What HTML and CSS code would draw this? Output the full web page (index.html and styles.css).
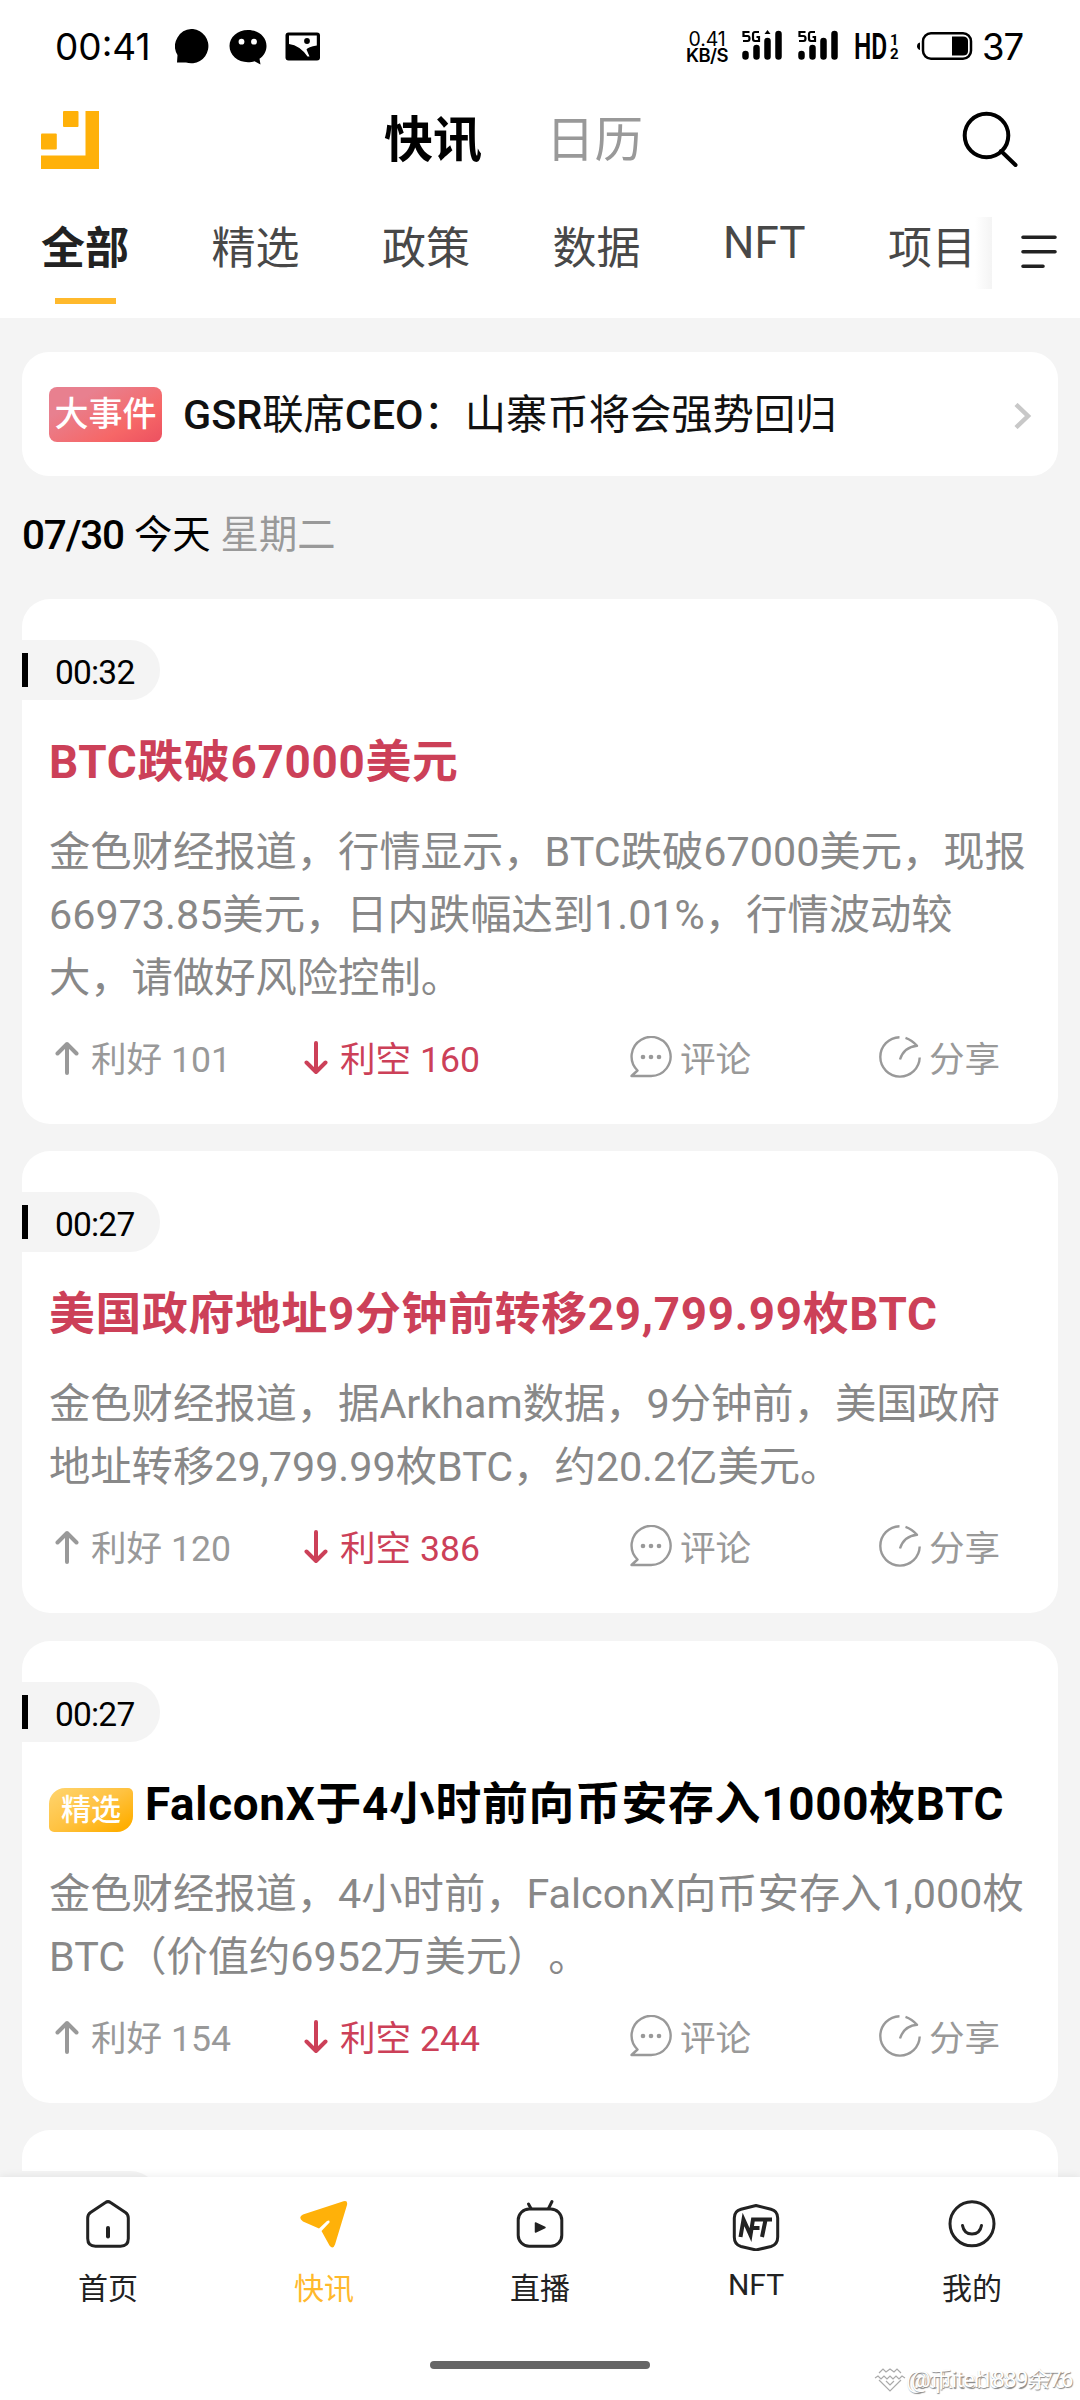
FILE: index.html
```html
<!DOCTYPE html>
<html lang="zh-CN">
<head>
<meta charset="utf-8">
<title>快讯</title>
<link rel="stylesheet" href="styles.css">
</head>
<body>
<svg class="defs" aria-hidden="true">
  <symbol id="up" viewBox="0 0 24 34"><path d="M12 32V3M2.500 12.500L12 3L21.500 12.500"/></symbol>
  <symbol id="down" viewBox="0 0 24 34"><path d="M12 2V31M2.500 21.500L12 31L21.500 21.500"/></symbol>
  <symbol id="comment" viewBox="0 0 42 42"><path d="M21 40H1.500L7.500 34.500A19.500 19.500 0 1 1 21 40Z"/><g class="dots"><circle cx="13" cy="21" r="2.300"/><circle cx="21" cy="21" r="2.300"/><circle cx="29" cy="21" r="2.300"/></g></symbol>
  <symbol id="share" viewBox="0 0 42 42"><path d="M20.500 1.200A19.700 19.700 0 1 0 40.700 21.500M26.500 1.800Q33 4 38 9.800Q25 11 21 23.500"/></symbol>
</svg>
<div class="screen">
  <header class="header">
    <div class="status">
      <div class="status-left">
        <span class="clock">00:41</span>
        <svg width="36" height="36" viewBox="0 0 36 36"><path d="M18 0A17.200 17.200 0 1 1 11 33.500L2 33.500L2.500 26A17.200 17.200 0 0 1 18 0Z"/></svg>
        <svg class="wechat" width="38" height="36" viewBox="0 0 38 36"><path d="M19 1C29.500 1 37.500 8 37.500 17C37.500 22.500 34.500 27 30.500 29.800L31.500 35.500L25.500 32.200C23.500 32.900 21.500 33.200 19 33.200C8.500 33.200.5 26 .5 17S8.500 1 19 1Z"/><circle cx="12.500" cy="12.700" r="2.900" fill="#fff"/><circle cx="25" cy="12.700" r="2.900" fill="#fff"/></svg>
        <svg class="photo" width="36" height="36" viewBox="0 0 36 36"><rect x=".5" y="3.500" width="34.500" height="28" rx="3"/><path d="M4 6.500H31.800V16.500Q23 18 21.500 20.500L24.500 27.500H22.500Q15 16.500 4 15Z" fill="#fff"/><circle cx="22" cy="12" r="2.900"/></svg>
      </div>
      <div class="status-right">
        <div class="speed"><span>0.41</span><b>KB/S</b></div>
        <svg width="41" height="32" viewBox="0 0 41 32"><g class="fiveg"><path d="M7.500 2H1.500V6H5.500Q7.500 6 7.500 8.500T5.500 11H1M17 2H13Q11 2 11 4.500V8.500Q11 11 13 11H17V7H14.500"/></g><path d="M25.500 0L28.500 4H22.500Z"/><path class="bars" d="M3.500 24V26.500M14.500 18V26.500M25.500 11V26.500M36.500 4V26.500"/></svg>
        <svg class="signal2" width="41" height="32" viewBox="0 0 41 32"><g class="fiveg"><path d="M7.500 2H1.500V6H5.500Q7.500 6 7.500 8.500T5.500 11H1M17 2H13Q11 2 11 4.500V8.500Q11 11 13 11H17V7H14.500"/></g><path class="bars" d="M3.500 24V26.500M14.500 18V26.500M25.500 11V26.500M36.500 4V26.500"/></svg>
        <span class="hd">HD</span>
        <span class="sims"><i>1</i><i>2</i></span>
        <svg class="battery" width="56" height="30" viewBox="0 0 56 30"><rect x="6" y="2.300" width="48" height="25.400" rx="8" fill="none" stroke="#000" stroke-width="2.500"/><path d="M35 5.500H46Q51 5.500 51 10V20Q51 24.500 46 24.500H35Z"/><path d="M3 11.500V19Q0 18 0 15.200T3 11.500Z"/></svg>
        <span class="level">37</span>
      </div>
    </div>
    <div class="topbar">
      <svg class="logo" width="58" height="58" viewBox="0 0 58 58"><path d="M44.500 0H58V58H0V44.500H44.500Z"/><rect x="22" width="15.500" height="16" rx="1"/><rect y="22.500" width="15.800" height="16" rx="1"/></svg>
      <div class="switcher"><b>快讯</b><span>日历</span></div>
      <svg class="search" width="58" height="58" viewBox="0 0 58 58"><circle cx="25.500" cy="24.500" r="21.800"/><path d="M40 40L54.500 54"/></svg>
    </div>
    <div class="tabs">
      <nav class="tablist">
        <span class="tab active">全部</span><span class="tab">精选</span><span class="tab">政策</span><span class="tab">数据</span><span class="tab latin">NFT</span><span class="tab">项目</span>
      </nav>
      <span class="fade"></span>
      <svg class="menu" width="36" height="34" viewBox="0 0 36 34"><path d="M2 2.200H34M2 16.700H34M2 31.200H22"/></svg>
    </div>
  </header>

  <main class="feed">
    <section class="banner">
      <span class="event">大事件</span>
      <span class="headline"><b>GSR</b>联席<b>CEO</b>：山寨币将会强势回归</span>
      <svg width="18" height="26" viewBox="0 0 18 26"><path d="M2 1.500L14 13L2 24.500"/></svg>
    </section>
    <div class="date"><b>07/30</b><span>今天</span><span class="weekday">星期二</span></div>

    <article class="card">
      <time class="time">00:32</time>
      <h2 class="title hot">BTC跌破67000美元</h2>
      <p class="body">金色财经报道，行情显示，BTC跌破67000美元，现报66973.85美元，日内跌幅达到1.01%，行情波动较大，请做好风险控制。</p>
      <div class="actions">
        <span class="act"><svg class="arrow"><use href="#up"/></svg>利好 101</span>
        <span class="act bear"><svg class="arrow"><use href="#down"/></svg>利空 160</span>
        <span class="act"><svg class="round"><use href="#comment"/></svg>评论</span>
        <span class="act"><svg class="round"><use href="#share"/></svg>分享</span>
      </div>
    </article>

    <article class="card">
      <time class="time">00:27</time>
      <h2 class="title hot">美国政府地址9分钟前转移29,799.99枚BTC</h2>
      <p class="body">金色财经报道，据Arkham数据，9分钟前，美国政府地址转移29,799.99枚BTC，约20.2亿美元。</p>
      <div class="actions">
        <span class="act"><svg class="arrow"><use href="#up"/></svg>利好 120</span>
        <span class="act bear"><svg class="arrow"><use href="#down"/></svg>利空 386</span>
        <span class="act"><svg class="round"><use href="#comment"/></svg>评论</span>
        <span class="act"><svg class="round"><use href="#share"/></svg>分享</span>
      </div>
    </article>

    <article class="card featured">
      <time class="time">00:27</time>
      <h2 class="title"><span class="pick">精选</span>FalconX于4小时前向币安存入1000枚BTC</h2>
      <p class="body">金色财经报道，4小时前，FalconX向币安存入1,000枚BTC（价值约6952万美元）。</p>
      <div class="actions">
        <span class="act"><svg class="arrow"><use href="#up"/></svg>利好 154</span>
        <span class="act bear"><svg class="arrow"><use href="#down"/></svg>利空 244</span>
        <span class="act"><svg class="round"><use href="#comment"/></svg>评论</span>
        <span class="act"><svg class="round"><use href="#share"/></svg>分享</span>
      </div>
    </article>

    <article class="card next"><span class="time"></span></article>
  </main>

  <footer class="footer">
    <nav class="nav">
      <a class="item"><svg viewBox="0 0 52 52"><path d="M23.500 3.500Q26 1.700 28.500 3.500L43.500 13.500Q46.300 15.500 46.300 19V39.500Q46.300 47.200 38.500 47.200H13.500Q5.700 47.200 5.700 39.500V19Q5.700 15.500 8.500 13.500Z"/><path class="door" d="M26 29V37.500"/></svg>首页</a>
      <a class="item on"><svg viewBox="0 0 52 52"><path d="M45.500 2.200Q50 1 49 6L37 45.500Q35 51 31.500 46.500L23.500 32L31.500 23.500Q32 20.500 29 22L21 29.500L5 22.500Q-.5 18.500 5 15.500Z"/></svg>快讯</a>
      <a class="item"><svg viewBox="0 0 52 52"><rect x="4.200" y="10" width="43.600" height="37.200" rx="11"/><path d="M14.500 5L17 9.500M38 2.500L34.500 9.500"/><path class="play" d="M21.500 24L31 28.500L21.500 33Z"/></svg>直播</a>
      <a class="item latin"><svg viewBox="0 0 52 52"><path d="M26 6.500L41 10.200Q47.700 12 47.700 19V38Q47.700 45.500 41 47.500L26 51L11 47.500Q4.300 45.500 4.300 38V19Q4.300 12 11 10.200Z"/><path class="mark" d="M10.500 38L13.500 20.500L20.500 36L23 20.500H42M22.500 29H29.500M35.500 21L32 38"/></svg>NFT</a>
      <a class="item"><svg viewBox="0 0 52 52"><circle cx="26" cy="24.800" r="22"/><path d="M16.500 26.500Q18 35 26 35T35.500 26.500"/></svg>我的</a>
    </nav>
    <span class="home-bar"></span>
    <div class="watermark">
      <svg width="32" height="24" viewBox="0 0 32 24"><path d="M5 5L9 1L12 4L16 1L20 4L23 1L27 5M1 10L4 8L7 11L10 8L13 11L16 8L19 11L22 8L25 11L28 8L31 10M5 12L16 23L27 12M12 13L16 17L20 13"/></svg>
      <span class="wm"><span>@qkiteb889476</span><span class="ghost">@币iter1889余76</span></span>
    </div>
  </footer>
</div>
</body>
</html>
```

FILE: styles.css
```css
* { box-sizing: border-box; }
body {
  margin: 0;
  font-family: Roboto, "Noto Sans CJK SC", sans-serif;
  background: #f4f4f4;
  color: #000;
  text-spacing-trim: space-all;
}
.defs { display: none; }
svg { display: block; flex: none; }
.screen {
  width: 1080px;
  height: 2400px;
  display: flex;
  flex-direction: column;
  overflow: hidden;
}

/* Header */
.header { height: 318px; flex: none; background: #fff; }
.status {
  height: 90px;
  padding: 0 57px 0 55px;
  display: flex;
  justify-content: space-between;
  align-items: center;
  font-family: Inter, sans-serif;
}
.status-left, .status-right { display: flex; align-items: center; }
.status-left svg { margin-top: 3px; }
.clock { width: 120px; font-size: 37px; line-height: 44px; margin-top: 3px; }
.wechat { margin-left: 18px; }
.photo { margin-left: 18px; }
.status-right svg { margin-top: 2px; }
.speed {
  width: 56px;
  display: flex;
  flex-direction: column;
  align-items: center;
  padding-right: 14px;
  margin-top: 3px;
  font-size: 19.500px;
  line-height: 16px;
  letter-spacing: -.2px;
}
.speed b { font-weight: 600; font-size: 18.500px; letter-spacing: -.6px; }
.fiveg path { fill: none; stroke: #000; stroke-width: 2.200; }
.bars { fill: none; stroke: #000; stroke-width: 6.500; stroke-linecap: round; }
.signal2 { margin-left: 15px; }
.hd {
  width: 35px;
  margin: 3px 0 0 15px;
  font: 600 36px/40px Roboto, sans-serif;
  transform: scaleX(.68);
  transform-origin: 0 50%;
}
.sims {
  width: 12px;
  margin: 3px 0 0 1px;
  display: flex;
  flex-direction: column;
  font: 700 15px/14px Roboto, sans-serif;
}
.sims i { font-style: normal; }
.battery { margin-left: 15px; }
.level { width: 41px; margin: 3px 0 0 9px; font-size: 36.500px; line-height: 44px; letter-spacing: -1px; }

.topbar {
  height: 100px;
  padding: 0 60px 0 41px;
  display: flex;
  align-items: center;
}
.logo { fill: #ffb109; }
.switcher { flex: 1; padding-left: 285px; display: flex; gap: 64px; font-size: 49px; line-height: 70px; margin-top: 2px; }
.switcher b { font-weight: 700; }
.switcher span { color: #999; font-size: 48.500px; }
.search { fill: none; stroke: #000; stroke-width: 4; stroke-linecap: round; margin: -1px 1px 0 0; }

.tabs { height: 128px; display: flex; align-items: flex-start; }
.tablist {
  width: 975px;
  height: 128px;
  flex: none;
  padding: 29px 0 0 41px;
  display: flex;
  gap: 82.500px;
  align-items: flex-start;
  overflow: hidden;
}
.tab { flex: none; font-size: 44px; line-height: 60px; color: #484848; }
.tab.active {
  color: #222;
  font-weight: 700;
  height: 85px;
  background: linear-gradient(#ffb92c, #ffb92c) 14px 100% / 61px 6px no-repeat;
}
.tab.latin { margin-top: -6px; }
.fade { width: 17px; height: 72px; margin-top: 27px; background: linear-gradient(90deg, #fff, #f4f4f4); }
.menu { margin: 45px 0 0 29px; fill: none; stroke: #222; stroke-width: 3.600; stroke-linecap: round; }

/* Feed */
.feed { flex: 1; min-height: 0; padding: 34px 22px 0; overflow: hidden; }
.banner {
  height: 124px;
  padding: 0 26px 0 27px;
  border-radius: 27px;
  background: #fff;
  display: flex;
  align-items: center;
}
.event {
  width: 113px;
  height: 55px;
  border-radius: 8px;
  background: linear-gradient(150deg, #e8808f 25%, #f66767 70%, #ec5060);
  color: #fff;
  font-size: 33px;
  font-weight: 500;
  line-height: 54px;
  text-align: center;
  white-space: nowrap;
}
.event { font-size: 34px; }
.headline { flex: 1; margin: 2px 0 0 21px; font-size: 41.300px; line-height: 60px; color: #111; }
.headline b { font-weight: 500; }
.banner svg { fill: none; stroke: #c8c8c8; stroke-width: 4.500; margin-top: 3px; }
.date {
  height: 123px;
  padding: 29px 0 0;
  display: flex;
  gap: 10px;
  font-size: 38.300px;
  line-height: 60px;
}
.date b { width: 102px; font-weight: 500; font-size: 40.500px; letter-spacing: -1.200px; }
.weekday { color: #999; }

.card {
  margin-bottom: 27px;
  padding: 41px 28px 39px;
  border-radius: 28px;
  background: #fff;
}
.featured { margin-top: 28px; }
.time {
  display: block;
  width: 138px;
  height: 60px;
  margin-left: -28px;
  padding-left: 33px;
  border-radius: 0 30px 30px 0;
  background: linear-gradient(#000, #000) 0 13px / 6px 34px no-repeat, #f4f4f4;
  font-size: 33.500px;
  line-height: 65px;
  letter-spacing: -.8px;
}
.title {
  height: 60px;
  margin: 33px 0 0;
  font-size: 45.800px;
  line-height: 60px;
  font-weight: 700;
  letter-spacing: .72px;
  white-space: nowrap;
  display: flex;
}
.hot { color: #cc4058; margin-left: -1px; }
.pick {
  width: 84px;
  height: 44px;
  margin: 13px 12px 0 -1px;
  border-radius: 16px 5px 16px 5px;
  background: linear-gradient(150deg, #ffd166 10%, #ffc240 50%, #ffae00 90%);
  color: #fff;
  font-size: 30px;
  font-weight: 500;
  line-height: 43px;
  letter-spacing: 0;
  text-align: center;
}
.body { margin: 28px 0 0 -1px; font-size: 41.300px; line-height: 63px; color: #888; }
.actions {
  height: 50px;
  margin: 25px 0 0 5px;
  display: grid;
  grid-template-columns: 249px 326px 249px auto;
  font-size: 35.600px;
  line-height: 50px;
  color: #999;
}
.act { display: flex; align-items: center; white-space: nowrap; }
.bear { color: #cc4058; }
.arrow { width: 24px; height: 34px; margin-right: 12px; margin-top: -4px; fill: none; stroke: currentColor; stroke-width: 4; stroke-linecap: round; stroke-linejoin: round; }
.round { width: 42px; height: 42px; margin-right: 8px; margin-top: -6px; fill: none; stroke: currentColor; stroke-width: 2.400; stroke-linejoin: round; }
.dots { fill: #999; stroke: none; }
.next { height: 120px; margin: 0; }

/* Bottom navigation */
.footer {
  position: relative;
  height: 223px;
  flex: none;
  display: flex;
  flex-direction: column;
  align-items: center;
  background: #fff;
  box-shadow: 0 -1px 8px rgba(0, 0, 0, .07);
}
.nav { width: 1080px; height: 184px; display: grid; grid-template-columns: repeat(5, 1fr); }
.item {
  display: flex;
  flex-direction: column;
  align-items: center;
  gap: 16px;
  padding-top: 22px;
  font-size: 30px;
  line-height: 44px;
  color: #222;
}
.item svg { width: 52px; height: 52px; fill: none; stroke: #222; stroke-width: 3; stroke-linecap: round; stroke-linejoin: round; }
.item .door { stroke-width: 4; }
.item .play { fill: #222; stroke-width: 1.500; }
.item .mark { stroke-width: 4; stroke-linecap: butt; stroke-linejoin: miter; }
.item.on { color: #ffb92c; }
.item.on svg { fill: #ffb109; stroke: none; }
.item.latin { gap: 12px; }
.home-bar { width: 220px; height: 8px; border-radius: 4px; background: #666; }
.watermark {
  position: absolute;
  right: 6px;
  bottom: 4px;
  display: flex;
  align-items: center;
  color: #fff;
  font-size: 24px;
  line-height: 32px;
}
.watermark svg { fill: none; stroke: #aaa; stroke-width: 1.200; }
.wm { display: grid; width: 168px; white-space: nowrap; text-shadow: .7px .7px 1px #888; letter-spacing: -.6px; }
.wm span { grid-area: 1 / 1; }
.wm .ghost { margin-left: 5px; font-size: 22px; }
```
